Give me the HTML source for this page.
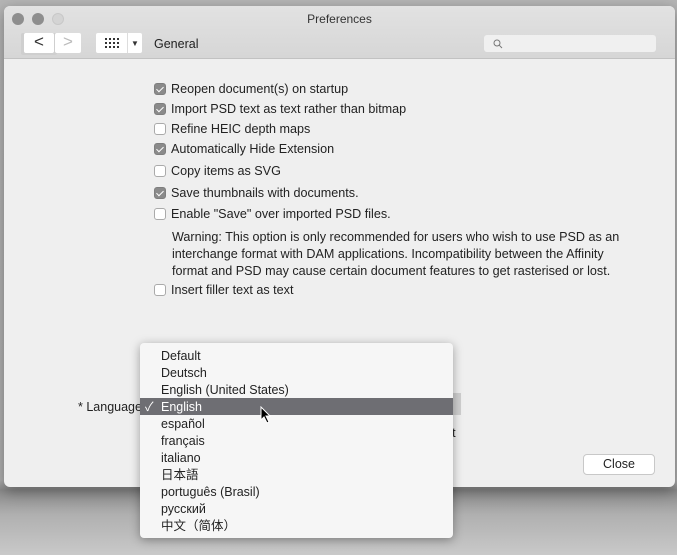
<!DOCTYPE html>
<html><head><meta charset="utf-8"><style>
*{margin:0;padding:0;box-sizing:border-box}
body{width:677px;height:555px;overflow:hidden;position:relative;font-family:"Liberation Sans","Noto Sans CJK SC",sans-serif;font-size:12.5px;line-height:15px;color:#222;background:linear-gradient(#b5b5b5 0,#b0b0b0 480px,#8a8a8a 490px,#b0b0b0 515px,#c9c9c9 555px)}
.win{position:absolute;left:4px;top:6px;width:671px;height:481px;background:#efefef;border-radius:6px;overflow:hidden;box-shadow:0 4px 14px rgba(0,0,0,.35)}
.tb{position:absolute;left:0;top:0;right:0;height:53px;background:linear-gradient(#e2e2e2,#d6d6d6);border-bottom:1px solid #c2c2c2}
.dot{position:absolute;top:7px;width:12px;height:12px;border-radius:50%;background:#8e8e8e}
.title{position:absolute;top:6px;left:0;right:0;text-align:center;font-size:12px;color:#333}
.btn{position:absolute;background:#fff;border-radius:2px}
.cb{position:absolute;left:154px;width:12px;height:12px;border:1px solid #aaa;border-radius:3px;background:#fff}
.cb.on{background:#8a8a8a;border-color:#7e7e7e}
.cb.on::after{content:"";position:absolute;left:3px;top:1px;width:3px;height:6px;border:solid #fff;border-width:0 1.5px 1.5px 0;transform:rotate(45deg)}
.lb{position:absolute;left:171px;font-size:12.6px;line-height:15px;white-space:nowrap}
.menu{position:absolute;left:140px;top:343px;width:313px;height:195px;background:#f6f6f6;border-radius:4px;box-shadow:0 2px 10px rgba(0,0,0,.35)}
.mi{position:absolute;left:21px;font-size:12.5px;line-height:15px;height:15px;white-space:nowrap}
</style></head><body>
<div class="win">
 <div class="tb">
  <div class="dot" style="left:8px"></div><div class="dot" style="left:28px"></div><div class="dot" style="left:48px;background:#d4d4d4;border:1px solid #c8c8c8"></div>
  <div class="title">Preferences</div>
  <div class="btn" style="left:17px;top:27px;width:36px;height:22px;background:#cfcfcf"></div>
  <div class="btn" style="left:20px;top:27px;width:30px;height:20px;font-size:17px;text-align:center;line-height:18px;color:#333">&lt;</div>
  <div class="btn" style="left:51px;top:27px;width:26px;height:20px;font-size:17px;text-align:center;line-height:18px;color:#bbb">&gt;</div>
  <div class="btn" style="left:92px;top:27px;width:46px;height:20px"></div>
  <div style="position:absolute;left:123px;top:27px;width:1px;height:20px;background:#ddd"></div>
  <svg style="position:absolute;left:101px;top:32px" width="14" height="10"><g fill="#333"><rect x="0" y="0" width="2" height="2"/><rect x="4" y="0" width="2" height="2"/><rect x="8" y="0" width="2" height="2"/><rect x="12" y="0" width="2" height="2"/><rect x="0" y="4" width="2" height="2"/><rect x="4" y="4" width="2" height="2"/><rect x="8" y="4" width="2" height="2"/><rect x="12" y="4" width="2" height="2"/><rect x="0" y="8" width="2" height="2"/><rect x="4" y="8" width="2" height="2"/><rect x="8" y="8" width="2" height="2"/><rect x="12" y="8" width="2" height="2"/></g></svg>
  <div style="position:absolute;left:127px;top:33px;font-size:8px;line-height:10px;color:#333">▼</div>
  <div style="position:absolute;left:150px;top:31px;font-size:12.5px">General</div>
  <div style="position:absolute;left:480px;top:29px;width:172px;height:17px;background:#f0f0f0;border-radius:3px"></div>
  <svg style="position:absolute;left:489px;top:33px" width="10" height="10"><circle cx="4" cy="4" r="3" fill="none" stroke="#777" stroke-width="1"/><line x1="6.2" y1="6.2" x2="9" y2="9" stroke="#777"/></svg>
 </div>
</div>
<div class="cb on" style="top:83px"></div><div class="lb" style="top:82px">Reopen document(s) on startup</div>
<div class="cb on" style="top:103px"></div><div class="lb" style="top:102px">Import PSD text as text rather than bitmap</div>
<div class="cb" style="top:123px"></div><div class="lb" style="top:122px">Refine HEIC depth maps</div>
<div class="cb on" style="top:143px"></div><div class="lb" style="top:142px">Automatically Hide Extension</div>
<div class="cb" style="top:165px"></div><div class="lb" style="top:164px">Copy items as SVG</div>
<div class="cb on" style="top:187px"></div><div class="lb" style="top:186px">Save thumbnails with documents.</div>
<div class="cb" style="top:208px"></div><div class="lb" style="top:207px">Enable "Save" over imported PSD files.</div>
<div style="position:absolute;left:172px;top:229px;font-size:12.6px;line-height:17px;width:460px">Warning: This option is only recommended for users who wish to use PSD as an interchange format with DAM applications. Incompatibility between the Affinity format and PSD may cause certain document features to get rasterised or lost.</div>
<div class="cb" style="top:284px"></div><div class="lb" style="top:283px">Insert filler text as text</div>
<div style="position:absolute;left:78px;top:400px">* Language</div>
<div style="position:absolute;left:453px;top:393px;width:8px;height:22px;background:#cfcfcf"></div>
<div style="position:absolute;left:448px;top:426px">rt</div>
<div style="position:absolute;left:583px;top:454px;width:72px;height:21px;background:#fff;border:1px solid #c8c8c8;border-radius:4px;text-align:center;line-height:19px">Close</div>
<div class="menu">
 <div class="mi" style="top:6px">Default</div>
 <div class="mi" style="top:23px">Deutsch</div>
 <div class="mi" style="top:40px">English (United States)</div>
 <div style="position:absolute;left:0;top:55px;width:313px;height:17px;background:#6e6e73"></div>
 <div class="mi" style="top:57px;left:5px;color:#fff">✓</div>
 <div class="mi" style="top:57px;color:#fff">English</div>
 <div class="mi" style="top:74px">español</div>
 <div class="mi" style="top:91px">français</div>
 <div class="mi" style="top:108px">italiano</div>
 <div class="mi" style="top:125px">日本語</div>
 <div class="mi" style="top:142px">português (Brasil)</div>
 <div class="mi" style="top:159px">русский</div>
 <div class="mi" style="top:176px">中文（简体）</div>
</div>
<svg style="position:absolute;left:260px;top:406px" width="12" height="18"><path d="M1 1 L1 14 L4 11 L7 17 L9 16 L6 10 L10 10 Z" fill="#000" stroke="#fff" stroke-width="1"/></svg>
</body></html>
